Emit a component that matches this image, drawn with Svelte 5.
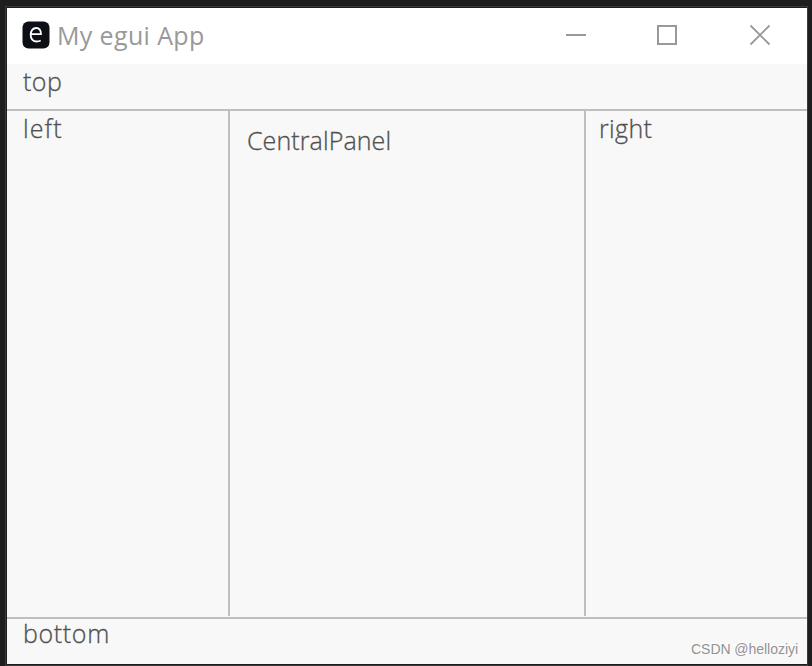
<script>
  const title = 'My egui App';
</script>

<div class="desktop">
  <div class="window">
    <header>
      <svg class="logo" width="28" height="28" viewBox="0 0 28 28">
        <rect x="0.5" y="0.5" width="27" height="27" rx="6" fill="#0c0f16" />
        <path d="M9 13.2H19C19 9 17.3 7 14.2 7C10.9 7 8.7 9.7 8.7 13.8C8.7 18.1 10.9 20.5 14.8 20.5C16.4 20.5 17.6 20.1 18.7 19.5" fill="none" stroke="#fff" stroke-width="1.8" />
      </svg>
      <span class="title">{title}</span>
      <svg class="controls" width="206" height="22" viewBox="0 0 206 22" fill="none" stroke="#999" stroke-width="2">
        <path d="M0 11H20" />
        <rect x="92" y="2" width="18" height="18" />
        <path d="M184.5 1.5L203.5 20.5M203.5 1.5L184.5 20.5" stroke-width="1.8" />
      </svg>
    </header>
    <div class="top"><span class="t-top">top</span></div>
    <main>
      <aside class="left"><span class="t-left">left</span></aside>
      <section><span class="t-central">CentralPanel</span></section>
      <aside class="right"><span class="t-right">right</span></aside>
    </main>
    <footer>
      <span class="t-bottom">bottom</span>
      <span class="credit">CSDN @helloziyi</span>
    </footer>
  </div>
</div>

<style>
  :global(body) { margin: 0; background: #1e1e1e; }
  .desktop {
    box-sizing: border-box;
    width: 812px;
    height: 666px;
    padding: 6px 4px 0 5px;
    background: #1e1e1e;
    overflow: hidden;
  }
  .window {
    box-sizing: border-box;
    height: 660px;
    display: flex;
    flex-direction: column;
    border: 1px solid #3c3a3c;
    box-shadow: inset 0 0 0 1px #1d1d1d;
    padding: 1px 0 1px 1px;
    font: 300 25px/34px "Open Sans", "Noto Sans", sans-serif;
    color: #505050;
    -webkit-text-stroke: 0.3px #505050;
  }
  header {
    box-sizing: border-box;
    height: 56px;
    flex: none;
    display: flex;
    align-items: flex-start;
    padding: 0 35px 0 15px;
    background: #fff;
  }
  .logo { margin-top: 13px; }
  .title {
    margin: 10px 0 0 7px;
    font: 400 25px/34px "Open Sans", "Noto Sans", sans-serif;
    letter-spacing: 0.36px;
    color: #999;
    -webkit-text-stroke: 0;
    white-space: nowrap;
  }
  .controls { margin: 16px 0 0 auto; }
  .top, main, footer { background: #f8f8f8; }
  .top { height: 45px; flex: none; padding-left: 16px; border-bottom: 2px solid #bebebe; }
  main { flex: 1; display: flex; }
  aside, section { box-sizing: border-box; }
  .left { width: 221px; padding: 0 0 0 16px; }
  section { width: 358px; margin-bottom: 1px; padding: 12px 0 0 17px; border: solid #bebebe; border-width: 0 2px; }
  .right { flex: 1; padding: 0 0 0 13px; }
  footer {
    height: 45px;
    flex: none;
    display: flex;
    justify-content: space-between;
    align-items: flex-start;
    padding: 0 9px 0 16px;
    border-top: 2px solid #bebebe;
  }
  .t-top { letter-spacing: 0.5px; }
  .t-left { letter-spacing: 1.1px; }
  .t-central { letter-spacing: 0.1px; }
  .t-right { letter-spacing: 0.35px; }
  .t-bottom { margin-top: -3px; letter-spacing: 0.65px; }
  .credit {
    margin-top: 22px;
    font: 400 14px/16px "Liberation Sans", Arial, sans-serif;
    letter-spacing: -0.04px;
    color: #929292;
    -webkit-text-stroke: 0;
    text-shadow: -1px -1px 0 #fff;
  }
</style>
